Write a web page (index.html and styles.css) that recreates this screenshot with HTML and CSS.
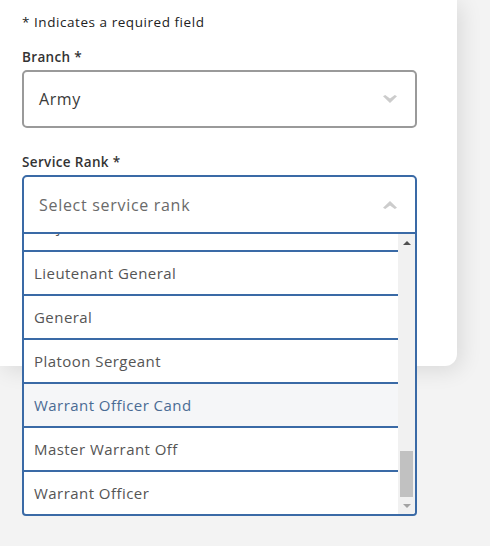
FILE: index.html
```html
<!DOCTYPE html>
<html lang="en">
<head>
<meta charset="utf-8">
<title>Service form</title>
<link rel="stylesheet" href="styles.css">
</head>
<body>
<div class="card">
  <p class="note">* Indicates a required field</p>
  <div class="field">
    <label class="label">Branch *</label>
    <div class="select">
      <span class="value">Army</span>
      <svg class="chev" width="14" height="8" viewBox="0 0 14 8"><path d="M0 1.2 L2.2 0 L7 3.6 L11.8 0 L14 1.2 L7 8 Z" fill="#cccccc"/></svg>
    </div>
  </div>
  <div class="field">
    <label class="label">Service Rank *</label>
    <div class="combo">
      <div class="select open">
        <span class="placeholder">Select service rank</span>
        <svg class="chev" width="14" height="8" viewBox="0 0 14 8"><path d="M0 6.8 L2.2 8 L7 4.4 L11.8 8 L14 6.8 L7 0 Z" fill="#cccccc"/></svg>
      </div>
      <div class="menu">
        <div class="options">
          <div class="option first">Major General</div>
          <div class="option">Lieutenant General</div>
          <div class="option">General</div>
          <div class="option">Platoon Sergeant</div>
          <div class="option hover">Warrant Officer Cand</div>
          <div class="option">Master Warrant Off</div>
          <div class="option last">Warrant Officer</div>
        </div>
        <div class="scrollbar">
          <div class="arrow up"></div>
          <div class="track"><div class="thumb"></div></div>
          <div class="arrow down"></div>
        </div>
      </div>
    </div>
  </div>
</div>
</body>
</html>
```
FILE: styles.css
```css
html, body {
  margin: 0;
  padding: 0;
}
body {
  background: #f3f3f3;
  font-family: "Open Sans", "Liberation Sans", sans-serif;
  color: #333;
  width: 490px;
  height: 546px;
  overflow: hidden;
}
.card {
  width: 457px;
  height: 366px;
  background: #fff;
  border-bottom-right-radius: 12px;
  box-shadow: 4px 4px 22px rgba(0, 0, 0, 0.11);
  box-sizing: border-box;
  padding: 13px 0 0 22px;
}
.note {
  margin: 0;
  font-size: 13.5px;
  letter-spacing: 0.55px;
  line-height: 18px;
  color: #222;
}
.field {
  margin-top: 17px;
  display: flex;
  flex-direction: column;
}
.field + .field {
  margin-top: 25px;
}
.label {
  font-size: 13.5px;
  font-weight: 600;
  letter-spacing: 0.35px;
  line-height: 18px;
  color: #333;
  margin-bottom: 4px;
}
.select {
  width: 395px;
  height: 58px;
  box-sizing: border-box;
  border: 2px solid #9a9a9a;
  border-radius: 5px;
  display: flex;
  align-items: center;
  justify-content: space-between;
  padding: 0 18px 0 15px;
}
.value {
  font-size: 16px;
  letter-spacing: 0.6px;
  color: #3a3a3a;
}
.placeholder {
  font-size: 16px;
  letter-spacing: 0.7px;
  color: #6a6a6a;
}
.combo {
  position: relative;
}
.select.open {
  border-color: #3a6aa6;
  border-bottom-left-radius: 0;
  border-bottom-right-radius: 0;
  height: 59px;
}
.chev {
  display: block;
}
.menu {
  position: absolute;
  left: 0;
  top: 100%;
  width: 395px;
  height: 282px;
  box-sizing: border-box;
  border: 2px solid #3a6aa6;
  border-top: 0;
  border-radius: 0 0 4px 4px;
  background: #fff;
  display: flex;
  overflow: hidden;
}
.options {
  flex: 1;
  overflow: hidden;
}
.option {
  height: 42px;
  border-bottom: 2px solid #3a6aa6;
  display: flex;
  align-items: center;
  padding-left: 10px;
  font-size: 15px;
  letter-spacing: 0.45px;
  color: #555;
}
.option.first {
  margin-top: -26px;
  padding-bottom: 6px;
  box-sizing: content-box;
  height: 36px;
}
.option.last {
  border-bottom: 0;
}
.option.hover {
  background: #f5f6f8;
  color: #4a6b94;
}
.scrollbar {
  width: 17px;
  background: #f1f1f1;
  display: flex;
  flex-direction: column;
}
.arrow {
  height: 17px;
  display: flex;
  align-items: center;
  justify-content: center;
}
.arrow::before {
  content: "";
  width: 0;
  height: 0;
  border-left: 4px solid transparent;
  border-right: 4px solid transparent;
}
.arrow.up::before {
  border-bottom: 4px solid #505050;
}
.arrow.down::before {
  border-top: 4px solid #a3a3a3;
}
.track {
  flex: 1;
  display: flex;
  flex-direction: column;
}
.thumb {
  margin: auto 2px 0;
  height: 46px;
  background: #c1c1c1;
}
```
